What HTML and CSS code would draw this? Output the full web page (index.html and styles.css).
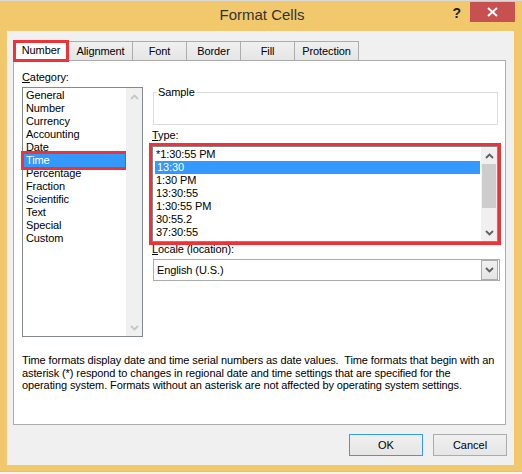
FILE: index.html
```html
<!DOCTYPE html>
<html>
<head>
<meta charset="utf-8">
<title>Format Cells</title>
<link rel="stylesheet" href="styles.css">
</head>
<body>
<div class="window">
  <div class="titlebar">
    <div class="tb-spacer"></div>
    <div class="title">Format Cells</div>
    <div class="tb-buttons">
      <span class="help">?</span>
      <span class="close"><svg width="11" height="10" viewBox="0 0 11 10"><path d="M1 1 L10 9 M10 1 L1 9" stroke="#fff" stroke-width="2"/></svg></span>
    </div>
  </div>
  <div class="client">
    <div class="tabs">
      <div class="tab tab-active w56">Number</div>
      <div class="tab w64">Alignment</div>
      <div class="tab w54">Font</div>
      <div class="tab w54">Border</div>
      <div class="tab w54">Fill</div>
      <div class="tab w64">Protection</div>
    </div>
    <div class="panel">
      <div class="panel-grid">
        <div class="col-left">
          <div class="label"><u>C</u>ategory:</div>
          <div class="listbox cat-list">
            <div class="items">
              <div class="item">General</div>
              <div class="item">Number</div>
              <div class="item">Currency</div>
              <div class="item">Accounting</div>
              <div class="item">Date</div>
              <div class="item item-sel boxed">Time</div>
              <div class="item">Percentage</div>
              <div class="item">Fraction</div>
              <div class="item">Scientific</div>
              <div class="item">Text</div>
              <div class="item">Special</div>
              <div class="item">Custom</div>
            </div>
            <div class="vscroll vscroll-disabled">
              <div class="sb-arrow"><svg width="9" height="6" viewBox="0 0 9 6"><path d="M1 5 L4.5 1.5 L8 5" fill="none" stroke="#c6c6c6" stroke-width="1.8"/></svg></div>
              <div class="sb-track"></div>
              <div class="sb-arrow"><svg width="9" height="6" viewBox="0 0 9 6"><path d="M1 1 L4.5 4.5 L8 1" fill="none" stroke="#c6c6c6" stroke-width="1.8"/></svg></div>
            </div>
          </div>
        </div>
        <div class="col-right">
          <fieldset class="sample">
            <legend>Sample</legend>
          </fieldset>
          <div class="label label-type"><u>T</u>ype:</div>
          <div class="listbox type-list boxed">
            <div class="items type-items">
              <div class="item titem">*1:30:55 PM</div>
              <div class="item titem item-sel focus">13:30</div>
              <div class="item titem">1:30 PM</div>
              <div class="item titem">13:30:55</div>
              <div class="item titem">1:30:55 PM</div>
              <div class="item titem">30:55.2</div>
              <div class="item titem">37:30:55</div>
            </div>
            <div class="vscroll">
              <div class="sb-arrow"><svg width="9" height="6" viewBox="0 0 9 6"><path d="M1 5 L4.5 1.5 L8 5" fill="none" stroke="#606060" stroke-width="1.8"/></svg></div>
              <div class="sb-thumb"></div>
              <div class="sb-track"></div>
              <div class="sb-arrow"><svg width="9" height="6" viewBox="0 0 9 6"><path d="M1 1 L4.5 4.5 L8 1" fill="none" stroke="#606060" stroke-width="1.8"/></svg></div>
            </div>
          </div>
          <div class="label label-locale"><u>L</u>ocale (location):</div>
          <div class="combo">
            <div class="combo-text">English (U.S.)</div>
            <div class="combo-btn"><svg width="9" height="6" viewBox="0 0 9 6"><path d="M1 1 L4.5 4.5 L8 1" fill="none" stroke="#606060" stroke-width="1.8"/></svg></div>
          </div>
        </div>
      </div>
      <p class="desc">Time formats display date and time serial numbers as date values.&nbsp; Time formats that begin with an<br>asterisk (*) respond to changes in regional date and time settings that are specified for the<br>operating system. Formats without an asterisk are not affected by operating system settings.</p>
    </div>
    <div class="buttons">
      <div class="btn btn-default">OK</div>
      <div class="btn">Cancel</div>
    </div>
  </div>
  <div class="bottom-strip"></div>
</div>
</body>
</html>
```

FILE: styles.css
```css
* { box-sizing: border-box; }
html, body { margin: 0; padding: 0; }
body {
  width: 522px;
  height: 474px;
  overflow: hidden;
  background: #f1c96c;
  font-family: "Liberation Sans", Arial, sans-serif;
  font-size: 11px;
  color: #000;
}
.window {
  width: 522px;
  height: 474px;
  display: flex;
  flex-direction: column;
  background: #f1c96c;
  border-top: 1px solid #d9d9d9;
}
.titlebar {
  height: 30px;
  display: grid;
  grid-template-columns: 1fr auto 1fr;
  align-items: start;
}
.title {
  font-size: 15px;
  color: #333;
  line-height: 28px;
  padding-left: 2px;
}
.tb-buttons {
  justify-self: end;
  display: flex;
  align-items: flex-start;
  margin-right: 7px;
}
.help {
  font-weight: bold;
  font-size: 14px;
  color: #222;
  line-height: 22px;
  margin-right: 9px;
  margin-top: 1px;
}
.close {
  width: 45px;
  height: 20px;
  margin-top: 1px;
  background: #c75050;
  display: flex;
  align-items: center;
  justify-content: center;
}
.client {
  height: 434px;
  margin: 0 8px 0 7px;
  background: #f0f0f0;
  padding: 9px 8px 0 6px;
  display: flex;
  flex-direction: column;
}
.tabs {
  display: flex;
  align-items: flex-end;
  height: 20px;
}
.tab {
  height: 19px;
  border: 1px solid #acacac;
  border-bottom: none;
  margin-left: -1px;
  background: linear-gradient(#f0f0f0, #e5e5e5);
  text-align: center;
  line-height: 18px;
  letter-spacing: -0.1px;
}
.tab:first-child { margin-left: 0; }
.w56 { width: 56px; }
.w64 { width: 65px; }
.w54 { width: 55px; }
.tab-active {
  position: relative;
  z-index: 2;
  height: 22px;
  margin-bottom: -2px;
  background: #fff;
  border: 3px solid #ee3338;
  line-height: 15px;
}
.panel {
  height: 365px;
  border: 1px solid #acacac;
  background: #fff;
  padding: 10px 6px 0 8px;
  display: flex;
  flex-direction: column;
}
.panel-grid {
  display: grid;
  grid-template-columns: 121px 347px;
  column-gap: 9px;
}
.col-left, .col-right {
  display: flex;
  flex-direction: column;
}
.label {
  line-height: 13px;
  letter-spacing: -0.1px;
}
.listbox {
  border: 1px solid #828790;
  background: #fff;
  display: flex;
}
.cat-list {
  margin-top: 3px;
  height: 250px;
}
.items {
  flex: 1;
  padding-top: 1px;
}
.item {
  height: 13px;
  line-height: 13px;
  margin: 0 1px;
  padding-left: 2px;
  letter-spacing: -0.1px;
  white-space: nowrap;
}
.item-sel {
  background: #3399ff;
  color: #fff;
}
.boxed {
  outline: 3px solid #ee3338;
}
.vscroll {
  width: 16px;
  background: #f0f0f0;
  display: flex;
  flex-direction: column;
}
.sb-arrow {
  height: 17px;
  display: flex;
  align-items: center;
  justify-content: center;
}
.sb-track { flex: 1; }
.sb-thumb {
  height: 44px;
  margin: 0 1px 0 1px;
  background: #cdcdcd;
}
.sample {
  margin: 15px 0 0 1px;
  height: 39px;
  width: 345px;
  border: 1px solid #dcdcdc;
  padding: 0;
}
.sample legend {
  margin-left: 3px;
  padding: 0 1px;
  line-height: 13px;
  letter-spacing: -0.1px;
}
.label-type { margin-top: 4px; }
.type-list {
  margin-top: 4px;
  height: 96px;
  width: 346px;
}
.type-items { padding-top: 1px; }
.titem {
  margin: 0 1px 0 2px;
  padding-left: 1px;
}
.focus {
  border: 1px dotted #c0782c;
  line-height: 11px;
}
.label-locale { margin-top: 1px; }
.combo {
  margin: 3px 0 0 1px;
  height: 22px;
  width: 347px;
  border: 1px solid #acacac;
  background: #fff;
  display: flex;
  align-items: center;
  padding: 1px;
}
.combo-text {
  flex: 1;
  padding-left: 2px;
  letter-spacing: -0.1px;
}
.combo-btn {
  width: 17px;
  height: 20px;
  border: 1px solid #acacac;
  background: linear-gradient(#f0f0f0, #e5e5e5);
  display: flex;
  align-items: center;
  justify-content: center;
}
.desc {
  margin: 17px 0 0 0;
  line-height: 12.5px;
  letter-spacing: -0.1px;
  white-space: nowrap;
}
.buttons {
  margin-top: 9px;
  margin-right: -1px;
  display: flex;
  justify-content: flex-end;
  gap: 10px;
}
.btn {
  width: 74px;
  height: 22px;
  border: 1px solid #acacac;
  background: linear-gradient(#f0f0f0, #e5e5e5);
  text-align: center;
  line-height: 20px;
}
.btn-default {
  border-color: #3399ff;
}
.bottom-strip {
  margin-top: auto;
  height: 3px;
  background: #f3f3f3;
  border-top: 1px solid #e2c27a;
}
```
